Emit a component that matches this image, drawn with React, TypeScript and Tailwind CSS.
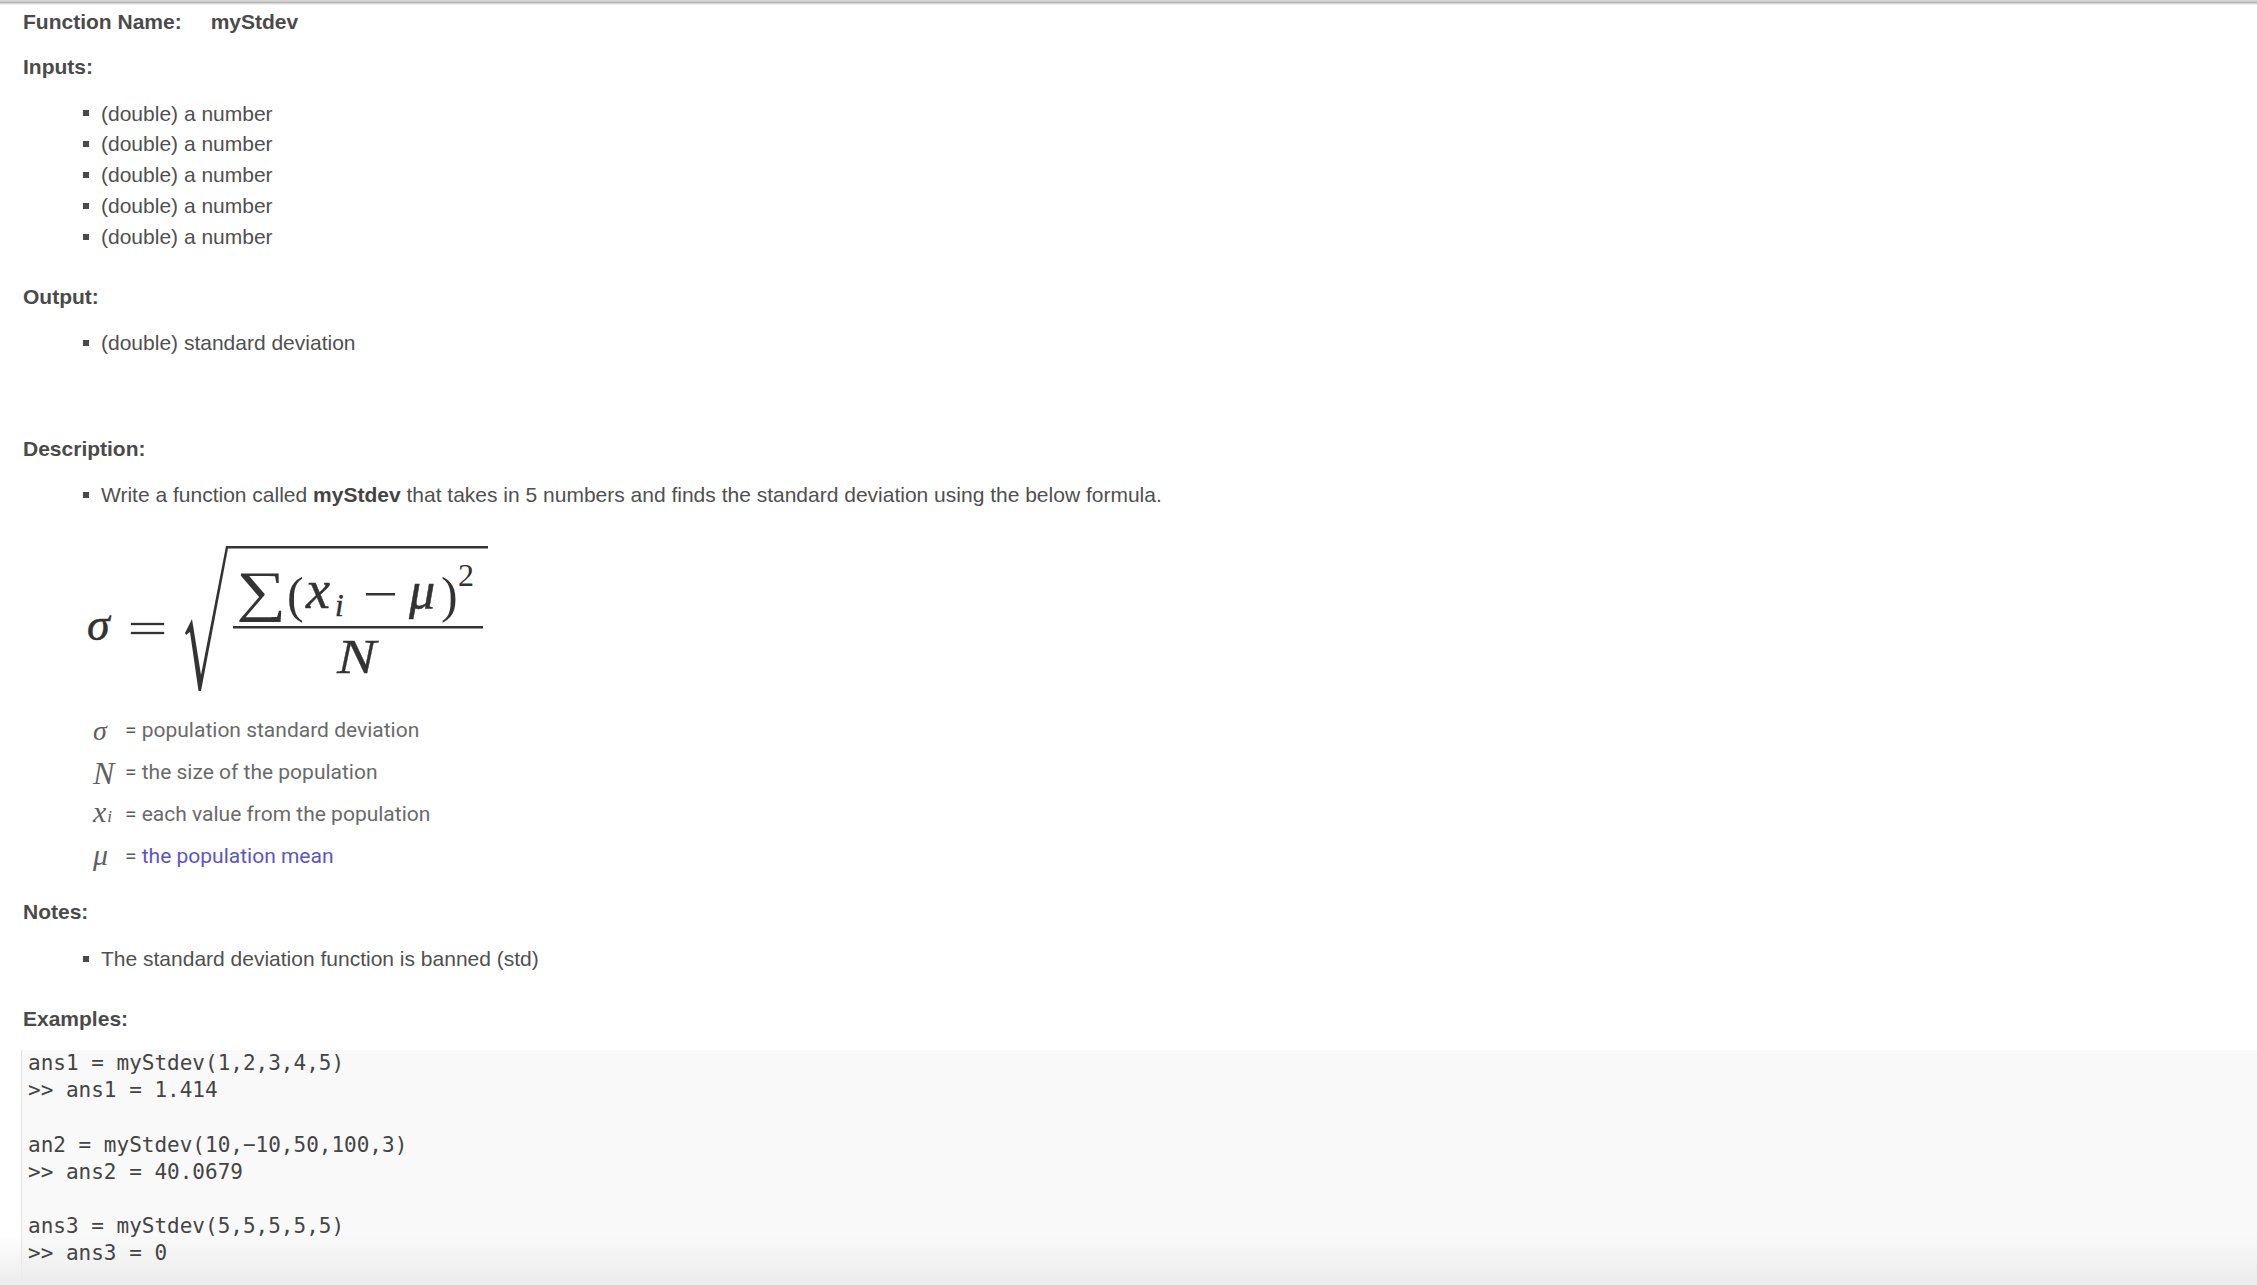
const mathFont = { fontFamily: '"Liberation Serif", serif' }

function Heading({ children, className = '' }: { children: React.ReactNode; className?: string }) {
  return <h3 className={`text-[21px] leading-[24px] font-bold text-[#4a4a4a] ${className}`}>{children}</h3>
}

function Bullets({ items, className = '' }: { items: React.ReactNode[]; className?: string }) {
  return (
    <ul className={`ml-[60px] ${className}`}>
      {items.map((item, i) => (
        <li key={i} className="flex h-[30.8px] items-center gap-[12px] text-[21px] text-[#505050]">
          <span className="h-[6px] w-[6px] shrink-0 bg-[#4a4a4a]" />
          <span>{item}</span>
        </li>
      ))}
    </ul>
  )
}

function Formula() {
  return (
    <svg width="440" height="165" viewBox="80 535 440 165" className="ml-[80px] mt-[23.5px] block" fill="#333333" stroke="#333333" strokeWidth="0.5" style={mathFont}>
      <text x="87" y="641" fontSize="46" fontStyle="italic">σ</text>
      <rect x="131" y="624" width="33" height="2" strokeWidth="0.3" />
      <rect x="131" y="633" width="33" height="2" strokeWidth="0.3" />
      <path d="M185 634 L192 620 L201 676 L226 547 L488 547 L488 549.5 L228 549.5 L201 692 L198.5 692 L190 633 L186 636 Z" strokeWidth="0" />
      <text fontSize="70" transform="translate(236 611) scale(1 0.8)" strokeWidth="0">∑</text>
      <text x="287" y="613" fontSize="50" strokeWidth="0">(</text>
      <text x="306" y="609" fontSize="54" fontStyle="italic">x</text>
      <text x="335" y="617" fontSize="31" fontStyle="italic">i</text>
      <rect x="366" y="594" width="29" height="2.5" strokeWidth="0" />
      <text x="409" y="609" fontSize="52" fontStyle="italic">μ</text>
      <text x="441" y="613" fontSize="50" strokeWidth="0">)</text>
      <text x="458" y="587" fontSize="32" strokeWidth="0">2</text>
      <rect x="233" y="627" width="250" height="2.5" strokeWidth="0" />
      <text fontSize="48" fontStyle="italic" strokeWidth="0.3" transform="translate(337 674) scale(1.22 1)">N</text>
    </svg>
  )
}

function LegendRow({ sym, sub, text, link, symClass = '' }: { sym: string; sub?: string; text: string; link?: boolean; symClass?: string }) {
  return (
    <div className="flex h-[42px] items-center">
      <span className={`relative h-[34px] w-[32px] leading-[34px] text-[#5f5f5f] italic ${symClass}`} style={mathFont}>
        {sym}
        {sub && <span className="ml-[1px] text-[17px]">{sub}</span>}
      </span>
      <span className="text-[21px] text-[#5c5c5c]" style={{ fontFamily: 'Roboto, sans-serif' }}>
        = <span className={link ? 'text-[#5a55cc]' : 'text-[#6a6a6a]'}>{text}</span>
      </span>
    </div>
  )
}

const codeLines = `ans1 = myStdev(1,2,3,4,5)
>> ans1 = 1.414

an2 = myStdev(10,−10,50,100,3)
>> ans2 = 40.0679

ans3 = myStdev(5,5,5,5,5)
>> ans3 = 0`

function App() {
  return (
    <div className="relative h-[1285px] w-full overflow-hidden bg-white" style={{ fontFamily: '"Liberation Sans", Arial, sans-serif' }}>
      <div className="h-[5px] bg-gradient-to-b from-[#e0e0e0] via-[#b9b9b9] to-white" />
      <div className="pl-[23px] pt-[5px]">
        <Heading>
          Function Name:<span className="ml-[29px]">myStdev</span>
        </Heading>
        <Heading className="mt-[21px]">Inputs:</Heading>
        <Bullets className="mt-[19px]" items={['(double) a number', '(double) a number', '(double) a number', '(double) a number', '(double) a number']} />
        <Heading className="mt-[33px]">Output:</Heading>
        <Bullets className="mt-[18.5px]" items={['(double) standard deviation']} />
      </div>
      <div className="pl-[23px] pt-[78.5px]">
        <Heading>Description:</Heading>
        <Bullets
          className="mt-[18.5px]"
          items={[
            <>
              Write a function called <b className="text-[#444444]">myStdev</b> that takes in 5 numbers and finds the standard deviation using the below formula.
            </>,
          ]}
        />
      </div>
      <Formula />
      <div className="ml-[93px] mt-[11px]">
        <LegendRow sym="σ" symClass="text-[28px]" text="population standard deviation" />
        <LegendRow sym="N" symClass="text-[32px]" text="the size of the population" />
        <LegendRow sym="x" sub="i" symClass="text-[30px] -translate-y-[3px]" text="each value from the population" />
        <LegendRow sym="μ" symClass="text-[30px] -translate-y-[2px]" text="the population mean" link />
      </div>
      <div className="pl-[23px] pt-[22px]">
        <Heading>Notes:</Heading>
        <Bullets className="mt-[20px]" items={['The standard deviation function is banned (std)']} />
        <Heading className="mt-[32.5px]">Examples:</Heading>
      </div>
      <pre
        className="ml-[21px] mt-[19.5px] h-[260px] border-l border-[#e4e4e4] bg-[#f9f9f9] pl-[6px] text-[21px] leading-[27.1px] text-[#444444]"
        style={{ fontFamily: '"DejaVu Sans Mono", monospace' }}
      >
        <span className="relative z-10">{codeLines}</span>
      </pre>
      <div className="absolute inset-x-0 bottom-0 h-[50px] bg-gradient-to-b from-[#f0f0f0]/0 to-[#ececec]" />
    </div>
  )
}

export default App
